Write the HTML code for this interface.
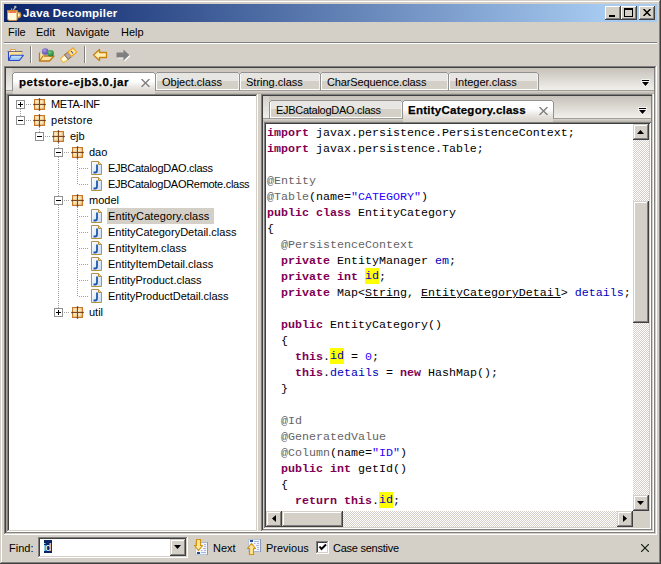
<!DOCTYPE html>
<html><head><meta charset="utf-8"><style>
html,body{margin:0;padding:0;width:661px;height:564px;overflow:hidden;background:#D4D0C8}
body>div,body>span,body>svg,div>div{position:absolute}
span{white-space:pre}
.cl{position:absolute;white-space:pre;font:400 11.667px/16px "Liberation Mono",monospace;color:#000;height:16px}
.cl b{font-weight:inherit}
</style></head><body>
<div style="left:0px;top:0px;width:661px;height:564px;background:#D4D0C8;"></div>
<div style="left:0px;top:0px;width:660px;height:1px;background:#D4D0C8;"></div>
<div style="left:1px;top:1px;width:658px;height:1px;background:#FFFFFF;"></div>
<div style="left:1px;top:1px;width:1px;height:561px;background:#FFFFFF;"></div>
<div style="left:660px;top:0px;width:1px;height:564px;background:#404040;"></div>
<div style="left:0px;top:563px;width:661px;height:1px;background:#404040;"></div>
<div style="left:659px;top:1px;width:1px;height:562px;background:#808080;"></div>
<div style="left:1px;top:562px;width:659px;height:1px;background:#808080;"></div>
<div style="left:4px;top:4px;width:653px;height:18px;background:linear-gradient(to right,#0A246A 0,#A6CAF0 601px);"></div>
<svg style="left:4px;top:4px" width="18" height="18" viewBox="0 0 18 18">
<path d="M7.3 6.3 L7.8 4.3" stroke="#A0A0A0" stroke-width="1.2" fill="none"/>
<path d="M9.3 6.3 L11 3.6" stroke="#A8A8A8" stroke-width="1.3" fill="none"/><circle cx="11.3" cy="3" r="1.2" fill="#B8B8B8"/>
<path d="M13.5 8.5 h0.8 a2.3 2.5 0 0 1 0 5 h-0.8" stroke="#C89040" stroke-width="1.4" fill="#FFF0D0"/>
<path d="M3.5 6.5 H13.5 V14.5 Q13.5 16.5 11.5 16.5 H5.5 Q3.5 16.5 3.5 14.5 Z" fill="#FFF8DC" stroke="#C08838" stroke-width="1"/>
<rect x="4" y="7" width="9" height="2" fill="#F0A050"/>
<rect x="6" y="7.2" width="6" height="1.6" fill="#F07050"/>
<path d="M12.5 8 V15" stroke="#E8C888" stroke-width="1"/>
</svg>
<span style="left:23px;top:5px;font:700 11.5px/16px 'Liberation Sans',sans-serif;color:#FFFFFF;letter-spacing:0.2px;">Java Decompiler</span>
<div style="left:605px;top:6px;width:16px;height:14px;background:#D4D0C8;"></div>
<div style="left:605px;top:6px;width:16px;height:1px;background:#FFFFFF;"></div>
<div style="left:605px;top:6px;width:1px;height:14px;background:#FFFFFF;"></div>
<div style="left:605px;top:19px;width:16px;height:1px;background:#404040;"></div>
<div style="left:620px;top:6px;width:1px;height:14px;background:#404040;"></div>
<div style="left:606px;top:18px;width:14px;height:1px;background:#808080;"></div>
<div style="left:619px;top:7px;width:1px;height:12px;background:#808080;"></div>
<div style="left:609px;top:15px;width:6px;height:2px;background:#000"></div>
<div style="left:621px;top:6px;width:16px;height:14px;background:#D4D0C8;"></div>
<div style="left:621px;top:6px;width:16px;height:1px;background:#FFFFFF;"></div>
<div style="left:621px;top:6px;width:1px;height:14px;background:#FFFFFF;"></div>
<div style="left:621px;top:19px;width:16px;height:1px;background:#404040;"></div>
<div style="left:636px;top:6px;width:1px;height:14px;background:#404040;"></div>
<div style="left:622px;top:18px;width:14px;height:1px;background:#808080;"></div>
<div style="left:635px;top:7px;width:1px;height:12px;background:#808080;"></div>
<div style="left:624px;top:8px;width:9px;height:9px;box-sizing:border-box;border:1px solid #000;border-top-width:2px"></div>
<div style="left:639px;top:6px;width:16px;height:14px;background:#D4D0C8;"></div>
<div style="left:639px;top:6px;width:16px;height:1px;background:#FFFFFF;"></div>
<div style="left:639px;top:6px;width:1px;height:14px;background:#FFFFFF;"></div>
<div style="left:639px;top:19px;width:16px;height:1px;background:#404040;"></div>
<div style="left:654px;top:6px;width:1px;height:14px;background:#404040;"></div>
<div style="left:640px;top:18px;width:14px;height:1px;background:#808080;"></div>
<div style="left:653px;top:7px;width:1px;height:12px;background:#808080;"></div>
<svg style="left:643px;top:9px" width="8" height="7" viewBox="0 0 8 7"><path d="M0.5 0 L7.5 7 M7.5 0 L0.5 7" stroke="#000" stroke-width="1.5"/></svg>
<span style="left:8px;top:24px;font:400 11px/16px 'Liberation Sans',sans-serif;color:#000;">File</span>
<span style="left:36px;top:24px;font:400 11px/16px 'Liberation Sans',sans-serif;color:#000;">Edit</span>
<span style="left:66px;top:24px;font:400 11px/16px 'Liberation Sans',sans-serif;color:#000;">Navigate</span>
<span style="left:121px;top:24px;font:400 11px/16px 'Liberation Sans',sans-serif;color:#000;">Help</span>
<div style="left:4px;top:42px;width:653px;height:1px;background:#808080;"></div>
<div style="left:4px;top:43px;width:653px;height:1px;background:#FFFFFF;"></div>
<div style="left:30px;top:46px;width:1px;height:17px;background:#808080;"></div>
<div style="left:31px;top:46px;width:1px;height:17px;background:#FFFFFF;"></div>
<div style="left:84px;top:46px;width:1px;height:17px;background:#808080;"></div>
<div style="left:85px;top:46px;width:1px;height:17px;background:#FFFFFF;"></div>
<svg style="left:6px;top:46px" width="20" height="18" viewBox="0 0 20 18">
<defs><linearGradient id="fl" x1="0" y1="0" x2="0" y2="1"><stop offset="0" stop-color="#D0ECFF"/><stop offset="1" stop-color="#88B8F0"/></linearGradient></defs>
<path d="M4.5 5.5 v-2 h5 v2" fill="#FFF" stroke="#D8A048" stroke-width="1"/>
<path d="M1.5 5.5 h15" stroke="#806878" stroke-width="1.1"/>
<rect x="3" y="6" width="12" height="8" fill="#FFE490"/>
<path d="M2.5 6 V14.5" stroke="#2444C4" stroke-width="1.1"/>
<path d="M5 9.3 H17.3 L13.3 14.5 H2.8 Z" fill="url(#fl)" stroke="#2848C8" stroke-width="1.1" stroke-linejoin="round"/>
</svg>
<svg style="left:36px;top:45px" width="20" height="19" viewBox="0 0 20 19">
<path d="M3.5 7.5 v8.5 h10 l4.5-5 h-10" fill="#FFE4A0" stroke="#C07818" stroke-width="1.3" stroke-linejoin="round"/>
<path d="M3.5 16 l4-5.5" stroke="#C07818" stroke-width="1.2"/>
<defs><radialGradient id="bp" cx="0.4" cy="0.35" r="0.7"><stop offset="0" stop-color="#A898E0"/><stop offset="1" stop-color="#5444A8"/></radialGradient>
<radialGradient id="bgn" cx="0.4" cy="0.35" r="0.7"><stop offset="0" stop-color="#70C880"/><stop offset="1" stop-color="#1E7A30"/></radialGradient></defs>
<circle cx="9.2" cy="6.5" r="3.3" fill="url(#bp)"/>
<circle cx="14.5" cy="8.2" r="3.3" fill="url(#bgn)"/>
</svg>
<svg style="left:58px;top:45px" width="22" height="19" viewBox="0 0 22 19">
<g transform="translate(10.4 10.4) rotate(-40)">
<path d="M-8.5 -2.3 L-2.6 -2.9 V2.9 L-8.5 2.3 Z" fill="#FFFCE0" stroke="#F0B030" stroke-width="1"/>
<rect x="-2.6" y="-2.9" width="4.3" height="5.8" fill="#B0A8BC" stroke="#987850" stroke-width="1"/>
<rect x="1.7" y="-2.9" width="6.8" height="5.8" fill="#FFE490" stroke="#F0A020" stroke-width="1"/>
<circle cx="4.8" cy="-0.9" r="0.7" fill="#2050A8"/><circle cx="4.8" cy="0.7" r="0.7" fill="#2050A8"/>
</g>
</svg>
<svg style="left:92px;top:48px" width="16" height="14" viewBox="0 0 16 14">
<path d="M1.5 7 L7.5 1.5 V4.5 H14.5 V9.5 H7.5 V12.5 Z" fill="#FFEFB0" stroke="#C88010" stroke-width="1.3" stroke-linejoin="round"/>
</svg>
<svg style="left:115px;top:48px" width="17" height="15" viewBox="0 0 17 15">
<path d="M2.5 5.5 H9.5 V2.5 L15.5 8 L9.5 13.5 V10.5 H2.5 Z" fill="#FFFFFF"/>
<path d="M1.5 4.5 H8.5 V1.5 L14.5 7 L8.5 12.5 V9.5 H1.5 Z" fill="#808080"/>
</svg>
<div style="left:4px;top:66px;width:653px;height:1px;background:#808080;"></div>
<div style="left:4px;top:66px;width:1px;height:469px;background:#808080;"></div>
<div style="left:5px;top:67px;width:651px;height:1px;background:#404040;"></div>
<div style="left:5px;top:67px;width:1px;height:467px;background:#404040;"></div>
<div style="left:654px;top:68px;width:1px;height:465px;background:#808080;"></div>
<div style="left:655px;top:67px;width:1px;height:467px;background:#D4D0C8;"></div>
<div style="left:656px;top:66px;width:1px;height:469px;background:#FFFFFF;"></div>
<div style="left:6px;top:532px;width:649px;height:1px;background:#808080;"></div>
<div style="left:5px;top:533px;width:651px;height:1px;background:#D4D0C8;"></div>
<div style="left:4px;top:534px;width:653px;height:1px;background:#FFFFFF;"></div>
<div style="left:6px;top:68px;width:648px;height:22px;background:linear-gradient(#C6C2BA,#F2F0EC);"></div>
<div style="left:6px;top:90px;width:648px;height:1px;background:#A09C98;"></div>
<div style="left:6px;top:91px;width:648px;height:3px;background:linear-gradient(#DAD6CE,#B4B0A8);"></div>
<div style="left:6px;top:68px;width:6px;height:22px;background:linear-gradient(#D4D0C8,#F0EEEA);"></div>
<div style="left:156px;top:73px;width:83px;height:8px;background:#E8E6E2;"></div>
<div style="left:156px;top:81px;width:83px;height:8px;background:#D4D0C8;"></div>
<div style="left:156px;top:89px;width:83px;height:1px;background:#FFFFFF;"></div>
<div style="left:156px;top:73px;width:1px;height:17px;background:#FFFFFF;"></div>
<div style="left:238px;top:73px;width:1px;height:17px;background:#F4F2EE;"></div>
<div style="left:157px;top:72px;width:81px;height:1px;background:#919191;"></div>
<div style="left:156px;top:73px;width:1px;height:1px;background:#A8A6A2;"></div>
<div style="left:238px;top:73px;width:1px;height:1px;background:#A8A6A2;"></div>
<div style="left:155px;top:72px;width:1px;height:2px;background:#C8C4BC;"></div>
<div style="left:239px;top:72px;width:1px;height:2px;background:#C8C4BC;"></div>
<div style="left:155px;top:74px;width:1px;height:17px;background:#919191;"></div>
<div style="left:239px;top:74px;width:1px;height:17px;background:#919191;"></div>
<span style="left:162px;top:74px;font:400 11px/16px 'Liberation Sans',sans-serif;color:#000;letter-spacing:0px;">Object.class</span>
<div style="left:240px;top:73px;width:80px;height:8px;background:#E8E6E2;"></div>
<div style="left:240px;top:81px;width:80px;height:8px;background:#D4D0C8;"></div>
<div style="left:240px;top:89px;width:80px;height:1px;background:#FFFFFF;"></div>
<div style="left:240px;top:73px;width:1px;height:17px;background:#FFFFFF;"></div>
<div style="left:319px;top:73px;width:1px;height:17px;background:#F4F2EE;"></div>
<div style="left:241px;top:72px;width:78px;height:1px;background:#919191;"></div>
<div style="left:240px;top:73px;width:1px;height:1px;background:#A8A6A2;"></div>
<div style="left:319px;top:73px;width:1px;height:1px;background:#A8A6A2;"></div>
<div style="left:239px;top:72px;width:1px;height:2px;background:#C8C4BC;"></div>
<div style="left:320px;top:72px;width:1px;height:2px;background:#C8C4BC;"></div>
<div style="left:239px;top:74px;width:1px;height:17px;background:#919191;"></div>
<div style="left:320px;top:74px;width:1px;height:17px;background:#919191;"></div>
<span style="left:246px;top:74px;font:400 11px/16px 'Liberation Sans',sans-serif;color:#000;letter-spacing:0px;">String.class</span>
<div style="left:321px;top:73px;width:127px;height:8px;background:#E8E6E2;"></div>
<div style="left:321px;top:81px;width:127px;height:8px;background:#D4D0C8;"></div>
<div style="left:321px;top:89px;width:127px;height:1px;background:#FFFFFF;"></div>
<div style="left:321px;top:73px;width:1px;height:17px;background:#FFFFFF;"></div>
<div style="left:447px;top:73px;width:1px;height:17px;background:#F4F2EE;"></div>
<div style="left:322px;top:72px;width:125px;height:1px;background:#919191;"></div>
<div style="left:321px;top:73px;width:1px;height:1px;background:#A8A6A2;"></div>
<div style="left:447px;top:73px;width:1px;height:1px;background:#A8A6A2;"></div>
<div style="left:320px;top:72px;width:1px;height:2px;background:#C8C4BC;"></div>
<div style="left:448px;top:72px;width:1px;height:2px;background:#C8C4BC;"></div>
<div style="left:320px;top:74px;width:1px;height:17px;background:#919191;"></div>
<div style="left:448px;top:74px;width:1px;height:17px;background:#919191;"></div>
<span style="left:327px;top:74px;font:400 11px/16px 'Liberation Sans',sans-serif;color:#000;letter-spacing:-0.12px;">CharSequence.class</span>
<div style="left:449px;top:73px;width:89px;height:8px;background:#E8E6E2;"></div>
<div style="left:449px;top:81px;width:89px;height:8px;background:#D4D0C8;"></div>
<div style="left:449px;top:89px;width:89px;height:1px;background:#FFFFFF;"></div>
<div style="left:449px;top:73px;width:1px;height:17px;background:#FFFFFF;"></div>
<div style="left:537px;top:73px;width:1px;height:17px;background:#F4F2EE;"></div>
<div style="left:450px;top:72px;width:87px;height:1px;background:#919191;"></div>
<div style="left:449px;top:73px;width:1px;height:1px;background:#A8A6A2;"></div>
<div style="left:537px;top:73px;width:1px;height:1px;background:#A8A6A2;"></div>
<div style="left:448px;top:72px;width:1px;height:2px;background:#C8C4BC;"></div>
<div style="left:538px;top:72px;width:1px;height:2px;background:#C8C4BC;"></div>
<div style="left:448px;top:74px;width:1px;height:17px;background:#919191;"></div>
<div style="left:538px;top:74px;width:1px;height:17px;background:#919191;"></div>
<span style="left:455px;top:74px;font:400 11px/16px 'Liberation Sans',sans-serif;color:#000;letter-spacing:0px;">Integer.class</span>
<div style="left:13px;top:73px;width:142px;height:21px;background:linear-gradient(#FFFFFF 0,#FFFFFF 8px,#E2DED8 16px,#D8D4CC 21px);"></div>
<div style="left:14px;top:72px;width:140px;height:1px;background:#919191;"></div>
<div style="left:12px;top:74px;width:1px;height:17px;background:#919191;"></div>
<div style="left:155px;top:74px;width:1px;height:17px;background:#919191;"></div>
<div style="left:13px;top:73px;width:1px;height:1px;background:#919191;"></div>
<div style="left:154px;top:73px;width:1px;height:1px;background:#919191;"></div>
<span style="left:19px;top:74px;font:700 11.5px/16px 'Liberation Sans',sans-serif;color:#000;letter-spacing:0.58px;-webkit-text-stroke:0.25px #000;">petstore-ejb3.0.jar</span>
<svg style="left:141px;top:79px" width="9" height="8" viewBox="0 0 9 8"><path d="M0.5 0 L8.5 8 M8.5 0 L0.5 8" stroke="#808080" stroke-width="1.4"/></svg>
<svg style="left:640px;top:78px" width="11" height="10" viewBox="0 0 11 10"><path d="M1 1.5 H10 M1 3.5 H10 L5.5 9 Z" stroke="#FFFFFF" stroke-width="1" fill="#FFFFFF" opacity="0.7"/><path d="M2 2.5 H9" stroke="#000" stroke-width="1"/><path d="M2 4 H9 L5.5 8 Z" fill="#000"/></svg>
<div style="left:6px;top:94px;width:251px;height:1px;background:#808080;"></div>
<div style="left:7px;top:95px;width:249px;height:1px;background:#404040;"></div>
<div style="left:261px;top:94px;width:391px;height:1px;background:#808080;"></div>
<div style="left:262px;top:95px;width:390px;height:1px;background:#404040;"></div>
<div style="left:7px;top:94px;width:1px;height:438px;background:#808080;"></div>
<div style="left:8px;top:95px;width:1px;height:436px;background:#404040;"></div>
<div style="left:9px;top:96px;width:247px;height:434px;background:#FFFFFF;"></div>
<div style="left:256px;top:95px;width:1px;height:436px;background:#D4D0C8;"></div>
<div style="left:257px;top:94px;width:1px;height:438px;background:#FFFFFF;"></div>
<div style="left:8px;top:530px;width:249px;height:1px;background:#D4D0C8;"></div>
<div style="left:7px;top:531px;width:251px;height:1px;background:#FFFFFF;"></div>
<div style="left:6px;top:94px;width:1px;height:438px;background:#A8A49C;"></div>
<div style="left:20px;top:109px;width:1px;height:1px;background:#A0A0A0;"></div>
<div style="left:20px;top:111px;width:1px;height:1px;background:#A0A0A0;"></div>
<div style="left:20px;top:113px;width:1px;height:1px;background:#A0A0A0;"></div>
<div style="left:20px;top:115px;width:1px;height:1px;background:#A0A0A0;"></div>
<div style="left:39px;top:127px;width:1px;height:1px;background:#A0A0A0;"></div>
<div style="left:39px;top:129px;width:1px;height:1px;background:#A0A0A0;"></div>
<div style="left:39px;top:131px;width:1px;height:1px;background:#A0A0A0;"></div>
<div style="left:58px;top:143px;width:1px;height:1px;background:#A0A0A0;"></div>
<div style="left:58px;top:145px;width:1px;height:1px;background:#A0A0A0;"></div>
<div style="left:58px;top:147px;width:1px;height:1px;background:#A0A0A0;"></div>
<div style="left:58px;top:149px;width:1px;height:1px;background:#A0A0A0;"></div>
<div style="left:58px;top:151px;width:1px;height:1px;background:#A0A0A0;"></div>
<div style="left:58px;top:153px;width:1px;height:1px;background:#A0A0A0;"></div>
<div style="left:58px;top:155px;width:1px;height:1px;background:#A0A0A0;"></div>
<div style="left:58px;top:157px;width:1px;height:1px;background:#A0A0A0;"></div>
<div style="left:58px;top:159px;width:1px;height:1px;background:#A0A0A0;"></div>
<div style="left:58px;top:161px;width:1px;height:1px;background:#A0A0A0;"></div>
<div style="left:58px;top:163px;width:1px;height:1px;background:#A0A0A0;"></div>
<div style="left:58px;top:165px;width:1px;height:1px;background:#A0A0A0;"></div>
<div style="left:58px;top:167px;width:1px;height:1px;background:#A0A0A0;"></div>
<div style="left:58px;top:169px;width:1px;height:1px;background:#A0A0A0;"></div>
<div style="left:58px;top:171px;width:1px;height:1px;background:#A0A0A0;"></div>
<div style="left:58px;top:173px;width:1px;height:1px;background:#A0A0A0;"></div>
<div style="left:58px;top:175px;width:1px;height:1px;background:#A0A0A0;"></div>
<div style="left:58px;top:177px;width:1px;height:1px;background:#A0A0A0;"></div>
<div style="left:58px;top:179px;width:1px;height:1px;background:#A0A0A0;"></div>
<div style="left:58px;top:181px;width:1px;height:1px;background:#A0A0A0;"></div>
<div style="left:58px;top:183px;width:1px;height:1px;background:#A0A0A0;"></div>
<div style="left:58px;top:185px;width:1px;height:1px;background:#A0A0A0;"></div>
<div style="left:58px;top:187px;width:1px;height:1px;background:#A0A0A0;"></div>
<div style="left:58px;top:189px;width:1px;height:1px;background:#A0A0A0;"></div>
<div style="left:58px;top:191px;width:1px;height:1px;background:#A0A0A0;"></div>
<div style="left:58px;top:193px;width:1px;height:1px;background:#A0A0A0;"></div>
<div style="left:58px;top:195px;width:1px;height:1px;background:#A0A0A0;"></div>
<div style="left:58px;top:197px;width:1px;height:1px;background:#A0A0A0;"></div>
<div style="left:58px;top:199px;width:1px;height:1px;background:#A0A0A0;"></div>
<div style="left:58px;top:201px;width:1px;height:1px;background:#A0A0A0;"></div>
<div style="left:58px;top:203px;width:1px;height:1px;background:#A0A0A0;"></div>
<div style="left:58px;top:205px;width:1px;height:1px;background:#A0A0A0;"></div>
<div style="left:58px;top:207px;width:1px;height:1px;background:#A0A0A0;"></div>
<div style="left:58px;top:209px;width:1px;height:1px;background:#A0A0A0;"></div>
<div style="left:58px;top:211px;width:1px;height:1px;background:#A0A0A0;"></div>
<div style="left:58px;top:213px;width:1px;height:1px;background:#A0A0A0;"></div>
<div style="left:58px;top:215px;width:1px;height:1px;background:#A0A0A0;"></div>
<div style="left:58px;top:217px;width:1px;height:1px;background:#A0A0A0;"></div>
<div style="left:58px;top:219px;width:1px;height:1px;background:#A0A0A0;"></div>
<div style="left:58px;top:221px;width:1px;height:1px;background:#A0A0A0;"></div>
<div style="left:58px;top:223px;width:1px;height:1px;background:#A0A0A0;"></div>
<div style="left:58px;top:225px;width:1px;height:1px;background:#A0A0A0;"></div>
<div style="left:58px;top:227px;width:1px;height:1px;background:#A0A0A0;"></div>
<div style="left:58px;top:229px;width:1px;height:1px;background:#A0A0A0;"></div>
<div style="left:58px;top:231px;width:1px;height:1px;background:#A0A0A0;"></div>
<div style="left:58px;top:233px;width:1px;height:1px;background:#A0A0A0;"></div>
<div style="left:58px;top:235px;width:1px;height:1px;background:#A0A0A0;"></div>
<div style="left:58px;top:237px;width:1px;height:1px;background:#A0A0A0;"></div>
<div style="left:58px;top:239px;width:1px;height:1px;background:#A0A0A0;"></div>
<div style="left:58px;top:241px;width:1px;height:1px;background:#A0A0A0;"></div>
<div style="left:58px;top:243px;width:1px;height:1px;background:#A0A0A0;"></div>
<div style="left:58px;top:245px;width:1px;height:1px;background:#A0A0A0;"></div>
<div style="left:58px;top:247px;width:1px;height:1px;background:#A0A0A0;"></div>
<div style="left:58px;top:249px;width:1px;height:1px;background:#A0A0A0;"></div>
<div style="left:58px;top:251px;width:1px;height:1px;background:#A0A0A0;"></div>
<div style="left:58px;top:253px;width:1px;height:1px;background:#A0A0A0;"></div>
<div style="left:58px;top:255px;width:1px;height:1px;background:#A0A0A0;"></div>
<div style="left:58px;top:257px;width:1px;height:1px;background:#A0A0A0;"></div>
<div style="left:58px;top:259px;width:1px;height:1px;background:#A0A0A0;"></div>
<div style="left:58px;top:261px;width:1px;height:1px;background:#A0A0A0;"></div>
<div style="left:58px;top:263px;width:1px;height:1px;background:#A0A0A0;"></div>
<div style="left:58px;top:265px;width:1px;height:1px;background:#A0A0A0;"></div>
<div style="left:58px;top:267px;width:1px;height:1px;background:#A0A0A0;"></div>
<div style="left:58px;top:269px;width:1px;height:1px;background:#A0A0A0;"></div>
<div style="left:58px;top:271px;width:1px;height:1px;background:#A0A0A0;"></div>
<div style="left:58px;top:273px;width:1px;height:1px;background:#A0A0A0;"></div>
<div style="left:58px;top:275px;width:1px;height:1px;background:#A0A0A0;"></div>
<div style="left:58px;top:277px;width:1px;height:1px;background:#A0A0A0;"></div>
<div style="left:58px;top:279px;width:1px;height:1px;background:#A0A0A0;"></div>
<div style="left:58px;top:281px;width:1px;height:1px;background:#A0A0A0;"></div>
<div style="left:58px;top:283px;width:1px;height:1px;background:#A0A0A0;"></div>
<div style="left:58px;top:285px;width:1px;height:1px;background:#A0A0A0;"></div>
<div style="left:58px;top:287px;width:1px;height:1px;background:#A0A0A0;"></div>
<div style="left:58px;top:289px;width:1px;height:1px;background:#A0A0A0;"></div>
<div style="left:58px;top:291px;width:1px;height:1px;background:#A0A0A0;"></div>
<div style="left:58px;top:293px;width:1px;height:1px;background:#A0A0A0;"></div>
<div style="left:58px;top:295px;width:1px;height:1px;background:#A0A0A0;"></div>
<div style="left:58px;top:297px;width:1px;height:1px;background:#A0A0A0;"></div>
<div style="left:58px;top:299px;width:1px;height:1px;background:#A0A0A0;"></div>
<div style="left:58px;top:301px;width:1px;height:1px;background:#A0A0A0;"></div>
<div style="left:58px;top:303px;width:1px;height:1px;background:#A0A0A0;"></div>
<div style="left:58px;top:305px;width:1px;height:1px;background:#A0A0A0;"></div>
<div style="left:58px;top:307px;width:1px;height:1px;background:#A0A0A0;"></div>
<div style="left:77px;top:159px;width:1px;height:1px;background:#A0A0A0;"></div>
<div style="left:77px;top:161px;width:1px;height:1px;background:#A0A0A0;"></div>
<div style="left:77px;top:163px;width:1px;height:1px;background:#A0A0A0;"></div>
<div style="left:77px;top:165px;width:1px;height:1px;background:#A0A0A0;"></div>
<div style="left:77px;top:167px;width:1px;height:1px;background:#A0A0A0;"></div>
<div style="left:77px;top:169px;width:1px;height:1px;background:#A0A0A0;"></div>
<div style="left:77px;top:171px;width:1px;height:1px;background:#A0A0A0;"></div>
<div style="left:77px;top:173px;width:1px;height:1px;background:#A0A0A0;"></div>
<div style="left:77px;top:175px;width:1px;height:1px;background:#A0A0A0;"></div>
<div style="left:77px;top:177px;width:1px;height:1px;background:#A0A0A0;"></div>
<div style="left:77px;top:179px;width:1px;height:1px;background:#A0A0A0;"></div>
<div style="left:77px;top:181px;width:1px;height:1px;background:#A0A0A0;"></div>
<div style="left:77px;top:183px;width:1px;height:1px;background:#A0A0A0;"></div>
<div style="left:77px;top:207px;width:1px;height:1px;background:#A0A0A0;"></div>
<div style="left:77px;top:209px;width:1px;height:1px;background:#A0A0A0;"></div>
<div style="left:77px;top:211px;width:1px;height:1px;background:#A0A0A0;"></div>
<div style="left:77px;top:213px;width:1px;height:1px;background:#A0A0A0;"></div>
<div style="left:77px;top:215px;width:1px;height:1px;background:#A0A0A0;"></div>
<div style="left:77px;top:217px;width:1px;height:1px;background:#A0A0A0;"></div>
<div style="left:77px;top:219px;width:1px;height:1px;background:#A0A0A0;"></div>
<div style="left:77px;top:221px;width:1px;height:1px;background:#A0A0A0;"></div>
<div style="left:77px;top:223px;width:1px;height:1px;background:#A0A0A0;"></div>
<div style="left:77px;top:225px;width:1px;height:1px;background:#A0A0A0;"></div>
<div style="left:77px;top:227px;width:1px;height:1px;background:#A0A0A0;"></div>
<div style="left:77px;top:229px;width:1px;height:1px;background:#A0A0A0;"></div>
<div style="left:77px;top:231px;width:1px;height:1px;background:#A0A0A0;"></div>
<div style="left:77px;top:233px;width:1px;height:1px;background:#A0A0A0;"></div>
<div style="left:77px;top:235px;width:1px;height:1px;background:#A0A0A0;"></div>
<div style="left:77px;top:237px;width:1px;height:1px;background:#A0A0A0;"></div>
<div style="left:77px;top:239px;width:1px;height:1px;background:#A0A0A0;"></div>
<div style="left:77px;top:241px;width:1px;height:1px;background:#A0A0A0;"></div>
<div style="left:77px;top:243px;width:1px;height:1px;background:#A0A0A0;"></div>
<div style="left:77px;top:245px;width:1px;height:1px;background:#A0A0A0;"></div>
<div style="left:77px;top:247px;width:1px;height:1px;background:#A0A0A0;"></div>
<div style="left:77px;top:249px;width:1px;height:1px;background:#A0A0A0;"></div>
<div style="left:77px;top:251px;width:1px;height:1px;background:#A0A0A0;"></div>
<div style="left:77px;top:253px;width:1px;height:1px;background:#A0A0A0;"></div>
<div style="left:77px;top:255px;width:1px;height:1px;background:#A0A0A0;"></div>
<div style="left:77px;top:257px;width:1px;height:1px;background:#A0A0A0;"></div>
<div style="left:77px;top:259px;width:1px;height:1px;background:#A0A0A0;"></div>
<div style="left:77px;top:261px;width:1px;height:1px;background:#A0A0A0;"></div>
<div style="left:77px;top:263px;width:1px;height:1px;background:#A0A0A0;"></div>
<div style="left:77px;top:265px;width:1px;height:1px;background:#A0A0A0;"></div>
<div style="left:77px;top:267px;width:1px;height:1px;background:#A0A0A0;"></div>
<div style="left:77px;top:269px;width:1px;height:1px;background:#A0A0A0;"></div>
<div style="left:77px;top:271px;width:1px;height:1px;background:#A0A0A0;"></div>
<div style="left:77px;top:273px;width:1px;height:1px;background:#A0A0A0;"></div>
<div style="left:77px;top:275px;width:1px;height:1px;background:#A0A0A0;"></div>
<div style="left:77px;top:277px;width:1px;height:1px;background:#A0A0A0;"></div>
<div style="left:77px;top:279px;width:1px;height:1px;background:#A0A0A0;"></div>
<div style="left:77px;top:281px;width:1px;height:1px;background:#A0A0A0;"></div>
<div style="left:77px;top:283px;width:1px;height:1px;background:#A0A0A0;"></div>
<div style="left:77px;top:285px;width:1px;height:1px;background:#A0A0A0;"></div>
<div style="left:77px;top:287px;width:1px;height:1px;background:#A0A0A0;"></div>
<div style="left:77px;top:289px;width:1px;height:1px;background:#A0A0A0;"></div>
<div style="left:77px;top:291px;width:1px;height:1px;background:#A0A0A0;"></div>
<div style="left:77px;top:293px;width:1px;height:1px;background:#A0A0A0;"></div>
<div style="left:77px;top:295px;width:1px;height:1px;background:#A0A0A0;"></div>
<div style="left:16px;top:100px;width:9px;height:9px;background:#FFFFFF;box-sizing:border-box;border:1px solid #919191;"></div>
<div style="left:18px;top:104px;width:5px;height:1px;background:#000;"></div>
<div style="left:20px;top:102px;width:1px;height:5px;background:#000;"></div>
<div style="left:26px;top:104px;width:1px;height:1px;background:#A0A0A0;"></div>
<div style="left:28px;top:104px;width:1px;height:1px;background:#A0A0A0;"></div>
<div style="left:30px;top:104px;width:1px;height:1px;background:#A0A0A0;"></div>
<svg style="left:33px;top:98px" width="13" height="13" viewBox="0 0 13 13">
<defs><radialGradient id="pg" cx="0.4" cy="0.4" r="0.7"><stop offset="0" stop-color="#FFF8C8"/><stop offset="0.5" stop-color="#F4D8A8"/><stop offset="1" stop-color="#D8AC78"/></radialGradient></defs>
<rect x="1.5" y="1.5" width="10" height="10" fill="#E0B888" stroke="#C87828" stroke-width="1"/>
<rect x="2" y="2" width="4.5" height="4.5" fill="url(#pg)"/><rect x="6.5" y="2" width="4.5" height="4.5" fill="url(#pg)"/>
<rect x="2" y="6.5" width="4.5" height="4.5" fill="url(#pg)"/><rect x="6.5" y="6.5" width="4.5" height="4.5" fill="url(#pg)"/>
<path d="M6.5 0.5 V12.5 M0.5 6.5 H12.5" stroke="#7A4A28" stroke-width="1"/><path d="M6.5 0.5 V1.5 M6.5 11.5 V12.5 M0.5 6.5 H1.5 M11.5 6.5 H12.5" stroke="#5A3010" stroke-width="1.5"/>
</svg>
<span style="left:51px;top:96px;font:400 11px/16px 'Liberation Sans',sans-serif;color:#000;letter-spacing:-0.29px;">META-INF</span>
<div style="left:16px;top:116px;width:9px;height:9px;background:#FFFFFF;box-sizing:border-box;border:1px solid #919191;"></div>
<div style="left:18px;top:120px;width:5px;height:1px;background:#000;"></div>
<div style="left:26px;top:120px;width:1px;height:1px;background:#A0A0A0;"></div>
<div style="left:28px;top:120px;width:1px;height:1px;background:#A0A0A0;"></div>
<div style="left:30px;top:120px;width:1px;height:1px;background:#A0A0A0;"></div>
<svg style="left:33px;top:114px" width="13" height="13" viewBox="0 0 13 13">
<defs><radialGradient id="pg" cx="0.4" cy="0.4" r="0.7"><stop offset="0" stop-color="#FFF8C8"/><stop offset="0.5" stop-color="#F4D8A8"/><stop offset="1" stop-color="#D8AC78"/></radialGradient></defs>
<rect x="1.5" y="1.5" width="10" height="10" fill="#E0B888" stroke="#C87828" stroke-width="1"/>
<rect x="2" y="2" width="4.5" height="4.5" fill="url(#pg)"/><rect x="6.5" y="2" width="4.5" height="4.5" fill="url(#pg)"/>
<rect x="2" y="6.5" width="4.5" height="4.5" fill="url(#pg)"/><rect x="6.5" y="6.5" width="4.5" height="4.5" fill="url(#pg)"/>
<path d="M6.5 0.5 V12.5 M0.5 6.5 H12.5" stroke="#7A4A28" stroke-width="1"/><path d="M6.5 0.5 V1.5 M6.5 11.5 V12.5 M0.5 6.5 H1.5 M11.5 6.5 H12.5" stroke="#5A3010" stroke-width="1.5"/>
</svg>
<span style="left:51px;top:112px;font:400 11px/16px 'Liberation Sans',sans-serif;color:#000;letter-spacing:0.28px;">petstore</span>
<div style="left:35px;top:132px;width:9px;height:9px;background:#FFFFFF;box-sizing:border-box;border:1px solid #919191;"></div>
<div style="left:37px;top:136px;width:5px;height:1px;background:#000;"></div>
<div style="left:45px;top:136px;width:1px;height:1px;background:#A0A0A0;"></div>
<div style="left:47px;top:136px;width:1px;height:1px;background:#A0A0A0;"></div>
<div style="left:49px;top:136px;width:1px;height:1px;background:#A0A0A0;"></div>
<svg style="left:52px;top:130px" width="13" height="13" viewBox="0 0 13 13">
<defs><radialGradient id="pg" cx="0.4" cy="0.4" r="0.7"><stop offset="0" stop-color="#FFF8C8"/><stop offset="0.5" stop-color="#F4D8A8"/><stop offset="1" stop-color="#D8AC78"/></radialGradient></defs>
<rect x="1.5" y="1.5" width="10" height="10" fill="#E0B888" stroke="#C87828" stroke-width="1"/>
<rect x="2" y="2" width="4.5" height="4.5" fill="url(#pg)"/><rect x="6.5" y="2" width="4.5" height="4.5" fill="url(#pg)"/>
<rect x="2" y="6.5" width="4.5" height="4.5" fill="url(#pg)"/><rect x="6.5" y="6.5" width="4.5" height="4.5" fill="url(#pg)"/>
<path d="M6.5 0.5 V12.5 M0.5 6.5 H12.5" stroke="#7A4A28" stroke-width="1"/><path d="M6.5 0.5 V1.5 M6.5 11.5 V12.5 M0.5 6.5 H1.5 M11.5 6.5 H12.5" stroke="#5A3010" stroke-width="1.5"/>
</svg>
<span style="left:70px;top:128px;font:400 11px/16px 'Liberation Sans',sans-serif;color:#000;letter-spacing:0px;">ejb</span>
<div style="left:54px;top:148px;width:9px;height:9px;background:#FFFFFF;box-sizing:border-box;border:1px solid #919191;"></div>
<div style="left:56px;top:152px;width:5px;height:1px;background:#000;"></div>
<div style="left:64px;top:152px;width:1px;height:1px;background:#A0A0A0;"></div>
<div style="left:66px;top:152px;width:1px;height:1px;background:#A0A0A0;"></div>
<div style="left:68px;top:152px;width:1px;height:1px;background:#A0A0A0;"></div>
<svg style="left:71px;top:146px" width="13" height="13" viewBox="0 0 13 13">
<defs><radialGradient id="pg" cx="0.4" cy="0.4" r="0.7"><stop offset="0" stop-color="#FFF8C8"/><stop offset="0.5" stop-color="#F4D8A8"/><stop offset="1" stop-color="#D8AC78"/></radialGradient></defs>
<rect x="1.5" y="1.5" width="10" height="10" fill="#E0B888" stroke="#C87828" stroke-width="1"/>
<rect x="2" y="2" width="4.5" height="4.5" fill="url(#pg)"/><rect x="6.5" y="2" width="4.5" height="4.5" fill="url(#pg)"/>
<rect x="2" y="6.5" width="4.5" height="4.5" fill="url(#pg)"/><rect x="6.5" y="6.5" width="4.5" height="4.5" fill="url(#pg)"/>
<path d="M6.5 0.5 V12.5 M0.5 6.5 H12.5" stroke="#7A4A28" stroke-width="1"/><path d="M6.5 0.5 V1.5 M6.5 11.5 V12.5 M0.5 6.5 H1.5 M11.5 6.5 H12.5" stroke="#5A3010" stroke-width="1.5"/>
</svg>
<span style="left:89px;top:144px;font:400 11px/16px 'Liberation Sans',sans-serif;color:#000;letter-spacing:0px;">dao</span>
<div style="left:79px;top:168px;width:1px;height:1px;background:#A0A0A0;"></div>
<div style="left:81px;top:168px;width:1px;height:1px;background:#A0A0A0;"></div>
<div style="left:83px;top:168px;width:1px;height:1px;background:#A0A0A0;"></div>
<div style="left:85px;top:168px;width:1px;height:1px;background:#A0A0A0;"></div>
<div style="left:87px;top:168px;width:1px;height:1px;background:#A0A0A0;"></div>
<svg style="left:91px;top:161px" width="12" height="15" viewBox="0 0 12 15">
<defs><linearGradient id="jg" x1="0" y1="0" x2="1" y2="1"><stop offset="0" stop-color="#FFFFFF"/><stop offset="1" stop-color="#C8DCF0"/></linearGradient></defs>
<path d="M0.5 0.5 H7.5 L10.5 3.5 V13.5 H0.5 Z" fill="url(#jg)" stroke="#B89040" stroke-width="1"/>
<path d="M7.5 0.5 V3.5 H10.5" fill="#E8D090" stroke="#B89040" stroke-width="1"/>
<path d="M6 3.5 V9.5 Q6 11.5 4 11.5 H2.5" fill="none" stroke="#2058B0" stroke-width="1.8"/>
</svg>
<span style="left:108px;top:160px;font:400 11px/16px 'Liberation Sans',sans-serif;color:#000;letter-spacing:-0.28px;">EJBCatalogDAO.class</span>
<div style="left:79px;top:184px;width:1px;height:1px;background:#A0A0A0;"></div>
<div style="left:81px;top:184px;width:1px;height:1px;background:#A0A0A0;"></div>
<div style="left:83px;top:184px;width:1px;height:1px;background:#A0A0A0;"></div>
<div style="left:85px;top:184px;width:1px;height:1px;background:#A0A0A0;"></div>
<div style="left:87px;top:184px;width:1px;height:1px;background:#A0A0A0;"></div>
<svg style="left:91px;top:177px" width="12" height="15" viewBox="0 0 12 15">
<defs><linearGradient id="jg" x1="0" y1="0" x2="1" y2="1"><stop offset="0" stop-color="#FFFFFF"/><stop offset="1" stop-color="#C8DCF0"/></linearGradient></defs>
<path d="M0.5 0.5 H7.5 L10.5 3.5 V13.5 H0.5 Z" fill="url(#jg)" stroke="#B89040" stroke-width="1"/>
<path d="M7.5 0.5 V3.5 H10.5" fill="#E8D090" stroke="#B89040" stroke-width="1"/>
<path d="M6 3.5 V9.5 Q6 11.5 4 11.5 H2.5" fill="none" stroke="#2058B0" stroke-width="1.8"/>
</svg>
<span style="left:108px;top:176px;font:400 11px/16px 'Liberation Sans',sans-serif;color:#000;letter-spacing:-0.29px;">EJBCatalogDAORemote.class</span>
<div style="left:54px;top:196px;width:9px;height:9px;background:#FFFFFF;box-sizing:border-box;border:1px solid #919191;"></div>
<div style="left:56px;top:200px;width:5px;height:1px;background:#000;"></div>
<div style="left:64px;top:200px;width:1px;height:1px;background:#A0A0A0;"></div>
<div style="left:66px;top:200px;width:1px;height:1px;background:#A0A0A0;"></div>
<div style="left:68px;top:200px;width:1px;height:1px;background:#A0A0A0;"></div>
<svg style="left:71px;top:194px" width="13" height="13" viewBox="0 0 13 13">
<defs><radialGradient id="pg" cx="0.4" cy="0.4" r="0.7"><stop offset="0" stop-color="#FFF8C8"/><stop offset="0.5" stop-color="#F4D8A8"/><stop offset="1" stop-color="#D8AC78"/></radialGradient></defs>
<rect x="1.5" y="1.5" width="10" height="10" fill="#E0B888" stroke="#C87828" stroke-width="1"/>
<rect x="2" y="2" width="4.5" height="4.5" fill="url(#pg)"/><rect x="6.5" y="2" width="4.5" height="4.5" fill="url(#pg)"/>
<rect x="2" y="6.5" width="4.5" height="4.5" fill="url(#pg)"/><rect x="6.5" y="6.5" width="4.5" height="4.5" fill="url(#pg)"/>
<path d="M6.5 0.5 V12.5 M0.5 6.5 H12.5" stroke="#7A4A28" stroke-width="1"/><path d="M6.5 0.5 V1.5 M6.5 11.5 V12.5 M0.5 6.5 H1.5 M11.5 6.5 H12.5" stroke="#5A3010" stroke-width="1.5"/>
</svg>
<span style="left:89px;top:192px;font:400 11px/16px 'Liberation Sans',sans-serif;color:#000;letter-spacing:0px;">model</span>
<div style="left:79px;top:216px;width:1px;height:1px;background:#A0A0A0;"></div>
<div style="left:81px;top:216px;width:1px;height:1px;background:#A0A0A0;"></div>
<div style="left:83px;top:216px;width:1px;height:1px;background:#A0A0A0;"></div>
<div style="left:85px;top:216px;width:1px;height:1px;background:#A0A0A0;"></div>
<div style="left:87px;top:216px;width:1px;height:1px;background:#A0A0A0;"></div>
<svg style="left:91px;top:209px" width="12" height="15" viewBox="0 0 12 15">
<defs><linearGradient id="jg" x1="0" y1="0" x2="1" y2="1"><stop offset="0" stop-color="#FFFFFF"/><stop offset="1" stop-color="#C8DCF0"/></linearGradient></defs>
<path d="M0.5 0.5 H7.5 L10.5 3.5 V13.5 H0.5 Z" fill="url(#jg)" stroke="#B89040" stroke-width="1"/>
<path d="M7.5 0.5 V3.5 H10.5" fill="#E8D090" stroke="#B89040" stroke-width="1"/>
<path d="M6 3.5 V9.5 Q6 11.5 4 11.5 H2.5" fill="none" stroke="#2058B0" stroke-width="1.8"/>
</svg>
<div style="left:107px;top:208px;width:107px;height:16px;background:#D4D0C8;"></div>
<span style="left:108px;top:208px;font:400 11px/16px 'Liberation Sans',sans-serif;color:#000;letter-spacing:0.1px;">EntityCategory.class</span>
<div style="left:79px;top:232px;width:1px;height:1px;background:#A0A0A0;"></div>
<div style="left:81px;top:232px;width:1px;height:1px;background:#A0A0A0;"></div>
<div style="left:83px;top:232px;width:1px;height:1px;background:#A0A0A0;"></div>
<div style="left:85px;top:232px;width:1px;height:1px;background:#A0A0A0;"></div>
<div style="left:87px;top:232px;width:1px;height:1px;background:#A0A0A0;"></div>
<svg style="left:91px;top:225px" width="12" height="15" viewBox="0 0 12 15">
<defs><linearGradient id="jg" x1="0" y1="0" x2="1" y2="1"><stop offset="0" stop-color="#FFFFFF"/><stop offset="1" stop-color="#C8DCF0"/></linearGradient></defs>
<path d="M0.5 0.5 H7.5 L10.5 3.5 V13.5 H0.5 Z" fill="url(#jg)" stroke="#B89040" stroke-width="1"/>
<path d="M7.5 0.5 V3.5 H10.5" fill="#E8D090" stroke="#B89040" stroke-width="1"/>
<path d="M6 3.5 V9.5 Q6 11.5 4 11.5 H2.5" fill="none" stroke="#2058B0" stroke-width="1.8"/>
</svg>
<span style="left:108px;top:224px;font:400 11px/16px 'Liberation Sans',sans-serif;color:#000;letter-spacing:0px;">EntityCategoryDetail.class</span>
<div style="left:79px;top:248px;width:1px;height:1px;background:#A0A0A0;"></div>
<div style="left:81px;top:248px;width:1px;height:1px;background:#A0A0A0;"></div>
<div style="left:83px;top:248px;width:1px;height:1px;background:#A0A0A0;"></div>
<div style="left:85px;top:248px;width:1px;height:1px;background:#A0A0A0;"></div>
<div style="left:87px;top:248px;width:1px;height:1px;background:#A0A0A0;"></div>
<svg style="left:91px;top:241px" width="12" height="15" viewBox="0 0 12 15">
<defs><linearGradient id="jg" x1="0" y1="0" x2="1" y2="1"><stop offset="0" stop-color="#FFFFFF"/><stop offset="1" stop-color="#C8DCF0"/></linearGradient></defs>
<path d="M0.5 0.5 H7.5 L10.5 3.5 V13.5 H0.5 Z" fill="url(#jg)" stroke="#B89040" stroke-width="1"/>
<path d="M7.5 0.5 V3.5 H10.5" fill="#E8D090" stroke="#B89040" stroke-width="1"/>
<path d="M6 3.5 V9.5 Q6 11.5 4 11.5 H2.5" fill="none" stroke="#2058B0" stroke-width="1.8"/>
</svg>
<span style="left:108px;top:240px;font:400 11px/16px 'Liberation Sans',sans-serif;color:#000;letter-spacing:0.1px;">EntityItem.class</span>
<div style="left:79px;top:264px;width:1px;height:1px;background:#A0A0A0;"></div>
<div style="left:81px;top:264px;width:1px;height:1px;background:#A0A0A0;"></div>
<div style="left:83px;top:264px;width:1px;height:1px;background:#A0A0A0;"></div>
<div style="left:85px;top:264px;width:1px;height:1px;background:#A0A0A0;"></div>
<div style="left:87px;top:264px;width:1px;height:1px;background:#A0A0A0;"></div>
<svg style="left:91px;top:257px" width="12" height="15" viewBox="0 0 12 15">
<defs><linearGradient id="jg" x1="0" y1="0" x2="1" y2="1"><stop offset="0" stop-color="#FFFFFF"/><stop offset="1" stop-color="#C8DCF0"/></linearGradient></defs>
<path d="M0.5 0.5 H7.5 L10.5 3.5 V13.5 H0.5 Z" fill="url(#jg)" stroke="#B89040" stroke-width="1"/>
<path d="M7.5 0.5 V3.5 H10.5" fill="#E8D090" stroke="#B89040" stroke-width="1"/>
<path d="M6 3.5 V9.5 Q6 11.5 4 11.5 H2.5" fill="none" stroke="#2058B0" stroke-width="1.8"/>
</svg>
<span style="left:108px;top:256px;font:400 11px/16px 'Liberation Sans',sans-serif;color:#000;letter-spacing:0px;">EntityItemDetail.class</span>
<div style="left:79px;top:280px;width:1px;height:1px;background:#A0A0A0;"></div>
<div style="left:81px;top:280px;width:1px;height:1px;background:#A0A0A0;"></div>
<div style="left:83px;top:280px;width:1px;height:1px;background:#A0A0A0;"></div>
<div style="left:85px;top:280px;width:1px;height:1px;background:#A0A0A0;"></div>
<div style="left:87px;top:280px;width:1px;height:1px;background:#A0A0A0;"></div>
<svg style="left:91px;top:273px" width="12" height="15" viewBox="0 0 12 15">
<defs><linearGradient id="jg" x1="0" y1="0" x2="1" y2="1"><stop offset="0" stop-color="#FFFFFF"/><stop offset="1" stop-color="#C8DCF0"/></linearGradient></defs>
<path d="M0.5 0.5 H7.5 L10.5 3.5 V13.5 H0.5 Z" fill="url(#jg)" stroke="#B89040" stroke-width="1"/>
<path d="M7.5 0.5 V3.5 H10.5" fill="#E8D090" stroke="#B89040" stroke-width="1"/>
<path d="M6 3.5 V9.5 Q6 11.5 4 11.5 H2.5" fill="none" stroke="#2058B0" stroke-width="1.8"/>
</svg>
<span style="left:108px;top:272px;font:400 11px/16px 'Liberation Sans',sans-serif;color:#000;letter-spacing:0px;">EntityProduct.class</span>
<div style="left:79px;top:296px;width:1px;height:1px;background:#A0A0A0;"></div>
<div style="left:81px;top:296px;width:1px;height:1px;background:#A0A0A0;"></div>
<div style="left:83px;top:296px;width:1px;height:1px;background:#A0A0A0;"></div>
<div style="left:85px;top:296px;width:1px;height:1px;background:#A0A0A0;"></div>
<div style="left:87px;top:296px;width:1px;height:1px;background:#A0A0A0;"></div>
<svg style="left:91px;top:289px" width="12" height="15" viewBox="0 0 12 15">
<defs><linearGradient id="jg" x1="0" y1="0" x2="1" y2="1"><stop offset="0" stop-color="#FFFFFF"/><stop offset="1" stop-color="#C8DCF0"/></linearGradient></defs>
<path d="M0.5 0.5 H7.5 L10.5 3.5 V13.5 H0.5 Z" fill="url(#jg)" stroke="#B89040" stroke-width="1"/>
<path d="M7.5 0.5 V3.5 H10.5" fill="#E8D090" stroke="#B89040" stroke-width="1"/>
<path d="M6 3.5 V9.5 Q6 11.5 4 11.5 H2.5" fill="none" stroke="#2058B0" stroke-width="1.8"/>
</svg>
<span style="left:108px;top:288px;font:400 11px/16px 'Liberation Sans',sans-serif;color:#000;letter-spacing:-0.05px;">EntityProductDetail.class</span>
<div style="left:54px;top:308px;width:9px;height:9px;background:#FFFFFF;box-sizing:border-box;border:1px solid #919191;"></div>
<div style="left:56px;top:312px;width:5px;height:1px;background:#000;"></div>
<div style="left:58px;top:310px;width:1px;height:5px;background:#000;"></div>
<div style="left:64px;top:312px;width:1px;height:1px;background:#A0A0A0;"></div>
<div style="left:66px;top:312px;width:1px;height:1px;background:#A0A0A0;"></div>
<div style="left:68px;top:312px;width:1px;height:1px;background:#A0A0A0;"></div>
<svg style="left:71px;top:306px" width="13" height="13" viewBox="0 0 13 13">
<defs><radialGradient id="pg" cx="0.4" cy="0.4" r="0.7"><stop offset="0" stop-color="#FFF8C8"/><stop offset="0.5" stop-color="#F4D8A8"/><stop offset="1" stop-color="#D8AC78"/></radialGradient></defs>
<rect x="1.5" y="1.5" width="10" height="10" fill="#E0B888" stroke="#C87828" stroke-width="1"/>
<rect x="2" y="2" width="4.5" height="4.5" fill="url(#pg)"/><rect x="6.5" y="2" width="4.5" height="4.5" fill="url(#pg)"/>
<rect x="2" y="6.5" width="4.5" height="4.5" fill="url(#pg)"/><rect x="6.5" y="6.5" width="4.5" height="4.5" fill="url(#pg)"/>
<path d="M6.5 0.5 V12.5 M0.5 6.5 H12.5" stroke="#7A4A28" stroke-width="1"/><path d="M6.5 0.5 V1.5 M6.5 11.5 V12.5 M0.5 6.5 H1.5 M11.5 6.5 H12.5" stroke="#5A3010" stroke-width="1.5"/>
</svg>
<span style="left:89px;top:304px;font:400 11px/16px 'Liberation Sans',sans-serif;color:#000;letter-spacing:0px;">util</span>
<div style="left:261px;top:94px;width:1px;height:438px;background:#808080;"></div>
<div style="left:262px;top:95px;width:1px;height:436px;background:#404040;"></div>
<div style="left:651px;top:96px;width:1px;height:434px;background:#808080;"></div>
<div style="left:652px;top:95px;width:1px;height:436px;background:#D4D0C8;"></div>
<div style="left:653px;top:94px;width:1px;height:438px;background:#FFFFFF;"></div>
<div style="left:263px;top:529px;width:389px;height:1px;background:#808080;"></div>
<div style="left:262px;top:530px;width:391px;height:1px;background:#D4D0C8;"></div>
<div style="left:257px;top:531px;width:397px;height:1px;background:#FFFFFF;"></div>
<div style="left:263px;top:96px;width:388px;height:22px;background:linear-gradient(#C6C2BA,#F2F0EC);"></div>
<div style="left:263px;top:118px;width:388px;height:1px;background:#A09C98;"></div>
<div style="left:263px;top:119px;width:388px;height:3px;background:linear-gradient(#DAD6CE,#B4B0A8);"></div>
<div style="left:263px;top:96px;width:6px;height:22px;background:linear-gradient(#D4D0C8,#F0EEEA);"></div>
<div style="left:270px;top:101px;width:132px;height:8px;background:#E8E6E2;"></div>
<div style="left:270px;top:109px;width:132px;height:8px;background:#D4D0C8;"></div>
<div style="left:270px;top:117px;width:132px;height:1px;background:#FFFFFF;"></div>
<div style="left:270px;top:101px;width:1px;height:17px;background:#FFFFFF;"></div>
<div style="left:401px;top:101px;width:1px;height:17px;background:#F4F2EE;"></div>
<div style="left:271px;top:100px;width:130px;height:1px;background:#919191;"></div>
<div style="left:270px;top:101px;width:1px;height:1px;background:#A8A6A2;"></div>
<div style="left:401px;top:101px;width:1px;height:1px;background:#A8A6A2;"></div>
<div style="left:269px;top:100px;width:1px;height:2px;background:#C8C4BC;"></div>
<div style="left:402px;top:100px;width:1px;height:2px;background:#C8C4BC;"></div>
<div style="left:269px;top:102px;width:1px;height:17px;background:#919191;"></div>
<div style="left:402px;top:102px;width:1px;height:17px;background:#919191;"></div>
<span style="left:276px;top:102px;font:400 11px/16px 'Liberation Sans',sans-serif;color:#000;letter-spacing:-0.28px;">EJBCatalogDAO.class</span>
<div style="left:403px;top:101px;width:150px;height:21px;background:linear-gradient(#FFFFFF 0,#FFFFFF 8px,#E2DED8 16px,#D8D4CC 21px);"></div>
<div style="left:404px;top:100px;width:148px;height:1px;background:#919191;"></div>
<div style="left:402px;top:102px;width:1px;height:17px;background:#919191;"></div>
<div style="left:553px;top:102px;width:1px;height:17px;background:#919191;"></div>
<div style="left:403px;top:101px;width:1px;height:1px;background:#919191;"></div>
<div style="left:552px;top:101px;width:1px;height:1px;background:#919191;"></div>
<span style="left:408px;top:102px;font:700 11.5px/16px 'Liberation Sans',sans-serif;color:#000;letter-spacing:0.25px;-webkit-text-stroke:0.25px #000;">EntityCategory.class</span>
<svg style="left:539px;top:107px" width="9" height="8" viewBox="0 0 9 8"><path d="M0.5 0 L8.5 8 M8.5 0 L0.5 8" stroke="#808080" stroke-width="1.4"/></svg>
<svg style="left:637px;top:106px" width="11" height="10" viewBox="0 0 11 10"><path d="M1 1.5 H10 M1 3.5 H10 L5.5 9 Z" stroke="#FFFFFF" stroke-width="1" fill="#FFFFFF" opacity="0.7"/><path d="M2 2.5 H9" stroke="#000" stroke-width="1"/><path d="M2 4 H9 L5.5 8 Z" fill="#000"/></svg>
<div style="left:264px;top:122px;width:387px;height:1px;background:#808080;"></div>
<div style="left:264px;top:122px;width:1px;height:407px;background:#808080;"></div>
<div style="left:265px;top:123px;width:385px;height:1px;background:#404040;"></div>
<div style="left:265px;top:123px;width:1px;height:405px;background:#404040;"></div>
<div style="left:649px;top:124px;width:1px;height:404px;background:#D4D0C8;"></div>
<div style="left:650px;top:123px;width:1px;height:406px;background:#FFFFFF;"></div>
<div style="left:265px;top:527px;width:385px;height:1px;background:#D4D0C8;"></div>
<div style="left:264px;top:528px;width:387px;height:1px;background:#FFFFFF;"></div>
<div style="left:266px;top:124px;width:367px;height:387px;background:#FFFFFF;"></div>
<div style="left:266px;top:124px;width:367px;height:387px;overflow:hidden">
<div class="cl" style="left:1px;top:1px"><b style="color:#7F0055;font-weight:700">import</b> javax.persistence.PersistenceContext;</div>
<div class="cl" style="left:1px;top:17px"><b style="color:#7F0055;font-weight:700">import</b> javax.persistence.Table;</div>
<div class="cl" style="left:1px;top:33px"></div>
<div class="cl" style="left:1px;top:49px"><b style="color:#646464">@Entity</b></div>
<div class="cl" style="left:1px;top:65px"><b style="color:#646464">@Table</b>(name=<b style="color:#2A00FF">&quot;CATEGORY&quot;</b>)</div>
<div class="cl" style="left:1px;top:81px"><b style="color:#7F0055;font-weight:700">public</b> <b style="color:#7F0055;font-weight:700">class</b> EntityCategory</div>
<div class="cl" style="left:1px;top:97px">{</div>
<div class="cl" style="left:1px;top:113px"><b style="color:#646464">  @PersistenceContext</b></div>
<div class="cl" style="left:1px;top:129px">  <b style="color:#7F0055;font-weight:700">private</b> EntityManager <b style="color:#0000C0">em</b>;</div>
<div class="cl" style="left:1px;top:145px">  <b style="color:#7F0055;font-weight:700">private</b> <b style="color:#7F0055;font-weight:700">int</b> <b style="background:#FFFF00;color:#0000C0;display:inline-block;height:16px;vertical-align:top;margin-top:-1px;line-height:17px">id</b>;</div>
<div class="cl" style="left:1px;top:161px">  <b style="color:#7F0055;font-weight:700">private</b> Map&lt;<b style="text-decoration:underline">String</b>, <b style="text-decoration:underline">EntityCategoryDetail</b>&gt; <b style="color:#0000C0">details</b>;</div>
<div class="cl" style="left:1px;top:177px"></div>
<div class="cl" style="left:1px;top:193px">  <b style="color:#7F0055;font-weight:700">public</b> EntityCategory()</div>
<div class="cl" style="left:1px;top:209px">  {</div>
<div class="cl" style="left:1px;top:225px">    <b style="color:#7F0055;font-weight:700">this</b>.<b style="background:#FFFF00;color:#0000C0;display:inline-block;height:16px;vertical-align:top;margin-top:-1px;line-height:17px">id</b> = <b style="color:#2A00FF">0</b>;</div>
<div class="cl" style="left:1px;top:241px">    <b style="color:#7F0055;font-weight:700">this</b>.<b style="color:#0000C0">details</b> = <b style="color:#7F0055;font-weight:700">new</b> HashMap();</div>
<div class="cl" style="left:1px;top:257px">  }</div>
<div class="cl" style="left:1px;top:273px"></div>
<div class="cl" style="left:1px;top:289px"><b style="color:#646464">  @Id</b></div>
<div class="cl" style="left:1px;top:305px"><b style="color:#646464">  @GeneratedValue</b></div>
<div class="cl" style="left:1px;top:321px">  <b style="color:#646464">@Column</b>(name=<b style="color:#2A00FF">&quot;ID&quot;</b>)</div>
<div class="cl" style="left:1px;top:337px">  <b style="color:#7F0055;font-weight:700">public</b> <b style="color:#7F0055;font-weight:700">int</b> getId()</div>
<div class="cl" style="left:1px;top:353px">  {</div>
<div class="cl" style="left:1px;top:369px">    <b style="color:#7F0055;font-weight:700">return</b> <b style="color:#7F0055;font-weight:700">this</b>.<b style="background:#FFFF00;color:#0000C0;display:inline-block;height:16px;vertical-align:top;margin-top:-1px;line-height:17px">id</b>;</div>
</div>
<div style="left:633px;top:124px;width:16px;height:387px;background:repeating-conic-gradient(#FFFFFF 0 25%,#D4D0C8 0 50%) 0 0/2px 2px;"></div>
<div style="left:633px;top:124px;width:16px;height:16px;background:#D4D0C8;"></div>
<div style="left:633px;top:124px;width:16px;height:1px;background:#D4D0C8;"></div>
<div style="left:633px;top:124px;width:1px;height:16px;background:#D4D0C8;"></div>
<div style="left:634px;top:125px;width:14px;height:1px;background:#FFFFFF;"></div>
<div style="left:634px;top:125px;width:1px;height:14px;background:#FFFFFF;"></div>
<div style="left:634px;top:138px;width:14px;height:1px;background:#808080;"></div>
<div style="left:647px;top:125px;width:1px;height:14px;background:#808080;"></div>
<div style="left:633px;top:139px;width:16px;height:1px;background:#404040;"></div>
<div style="left:648px;top:124px;width:1px;height:16px;background:#404040;"></div>
<svg style="left:637px;top:130px" width="7" height="4" viewBox="0 0 7 4"><path d="M3.5 0 L7 4 H0 Z" fill="#000"/></svg>
<div style="left:633px;top:201px;width:16px;height:122px;background:#D4D0C8;"></div>
<div style="left:633px;top:201px;width:16px;height:1px;background:#D4D0C8;"></div>
<div style="left:633px;top:201px;width:1px;height:122px;background:#D4D0C8;"></div>
<div style="left:634px;top:202px;width:14px;height:1px;background:#FFFFFF;"></div>
<div style="left:634px;top:202px;width:1px;height:120px;background:#FFFFFF;"></div>
<div style="left:634px;top:321px;width:14px;height:1px;background:#808080;"></div>
<div style="left:647px;top:202px;width:1px;height:120px;background:#808080;"></div>
<div style="left:633px;top:322px;width:16px;height:1px;background:#404040;"></div>
<div style="left:648px;top:201px;width:1px;height:122px;background:#404040;"></div>
<div style="left:633px;top:495px;width:16px;height:16px;background:#D4D0C8;"></div>
<div style="left:633px;top:495px;width:16px;height:1px;background:#D4D0C8;"></div>
<div style="left:633px;top:495px;width:1px;height:16px;background:#D4D0C8;"></div>
<div style="left:634px;top:496px;width:14px;height:1px;background:#FFFFFF;"></div>
<div style="left:634px;top:496px;width:1px;height:14px;background:#FFFFFF;"></div>
<div style="left:634px;top:509px;width:14px;height:1px;background:#808080;"></div>
<div style="left:647px;top:496px;width:1px;height:14px;background:#808080;"></div>
<div style="left:633px;top:510px;width:16px;height:1px;background:#404040;"></div>
<div style="left:648px;top:495px;width:1px;height:16px;background:#404040;"></div>
<svg style="left:637px;top:501px" width="7" height="4" viewBox="0 0 7 4"><path d="M0 0 H7 L3.5 4 Z" fill="#000"/></svg>
<div style="left:266px;top:511px;width:367px;height:16px;background:repeating-conic-gradient(#FFFFFF 0 25%,#D4D0C8 0 50%) 0 0/2px 2px;"></div>
<div style="left:266px;top:511px;width:16px;height:16px;background:#D4D0C8;"></div>
<div style="left:266px;top:511px;width:16px;height:1px;background:#D4D0C8;"></div>
<div style="left:266px;top:511px;width:1px;height:16px;background:#D4D0C8;"></div>
<div style="left:267px;top:512px;width:14px;height:1px;background:#FFFFFF;"></div>
<div style="left:267px;top:512px;width:1px;height:14px;background:#FFFFFF;"></div>
<div style="left:267px;top:525px;width:14px;height:1px;background:#808080;"></div>
<div style="left:280px;top:512px;width:1px;height:14px;background:#808080;"></div>
<div style="left:266px;top:526px;width:16px;height:1px;background:#404040;"></div>
<div style="left:281px;top:511px;width:1px;height:16px;background:#404040;"></div>
<svg style="left:272px;top:515px" width="4" height="7" viewBox="0 0 4 7"><path d="M0 3.5 L4 0 V7 Z" fill="#000"/></svg>
<div style="left:282px;top:511px;width:61px;height:16px;background:#D4D0C8;"></div>
<div style="left:282px;top:511px;width:61px;height:1px;background:#D4D0C8;"></div>
<div style="left:282px;top:511px;width:1px;height:16px;background:#D4D0C8;"></div>
<div style="left:283px;top:512px;width:59px;height:1px;background:#FFFFFF;"></div>
<div style="left:283px;top:512px;width:1px;height:14px;background:#FFFFFF;"></div>
<div style="left:283px;top:525px;width:59px;height:1px;background:#808080;"></div>
<div style="left:341px;top:512px;width:1px;height:14px;background:#808080;"></div>
<div style="left:282px;top:526px;width:61px;height:1px;background:#404040;"></div>
<div style="left:342px;top:511px;width:1px;height:16px;background:#404040;"></div>
<div style="left:617px;top:511px;width:16px;height:16px;background:#D4D0C8;"></div>
<div style="left:617px;top:511px;width:16px;height:1px;background:#D4D0C8;"></div>
<div style="left:617px;top:511px;width:1px;height:16px;background:#D4D0C8;"></div>
<div style="left:618px;top:512px;width:14px;height:1px;background:#FFFFFF;"></div>
<div style="left:618px;top:512px;width:1px;height:14px;background:#FFFFFF;"></div>
<div style="left:618px;top:525px;width:14px;height:1px;background:#808080;"></div>
<div style="left:631px;top:512px;width:1px;height:14px;background:#808080;"></div>
<div style="left:617px;top:526px;width:16px;height:1px;background:#404040;"></div>
<div style="left:632px;top:511px;width:1px;height:16px;background:#404040;"></div>
<svg style="left:623px;top:515px" width="4" height="7" viewBox="0 0 4 7"><path d="M4 3.5 L0 0 V7 Z" fill="#000"/></svg>
<div style="left:633px;top:511px;width:16px;height:16px;background:#D4D0C8;"></div>
<span style="left:9px;top:540px;font:400 11px/16px 'Liberation Sans',sans-serif;color:#000;">Find:</span>
<div style="left:38px;top:537px;width:150px;height:1px;background:#808080;"></div>
<div style="left:38px;top:537px;width:1px;height:21px;background:#808080;"></div>
<div style="left:39px;top:538px;width:148px;height:1px;background:#404040;"></div>
<div style="left:39px;top:538px;width:1px;height:19px;background:#404040;"></div>
<div style="left:39px;top:556px;width:148px;height:1px;background:#D4D0C8;"></div>
<div style="left:186px;top:538px;width:1px;height:19px;background:#D4D0C8;"></div>
<div style="left:38px;top:557px;width:150px;height:1px;background:#FFFFFF;"></div>
<div style="left:187px;top:537px;width:1px;height:21px;background:#FFFFFF;"></div>
<div style="left:40px;top:539px;width:146px;height:17px;background:#FFFFFF;"></div>
<div style="left:44px;top:540px;width:8px;height:13px;background:#0A246A;"></div>
<span style="left:43.5px;top:539px;font:400 11px/16px 'Liberation Sans',sans-serif;color:#FFFFFF;letter-spacing:-0.7px;">id</span>
<div style="left:170px;top:539px;width:16px;height:17px;background:#D4D0C8;"></div>
<div style="left:170px;top:539px;width:16px;height:1px;background:#D4D0C8;"></div>
<div style="left:170px;top:539px;width:1px;height:17px;background:#D4D0C8;"></div>
<div style="left:171px;top:540px;width:14px;height:1px;background:#FFFFFF;"></div>
<div style="left:171px;top:540px;width:1px;height:15px;background:#FFFFFF;"></div>
<div style="left:171px;top:554px;width:14px;height:1px;background:#808080;"></div>
<div style="left:184px;top:540px;width:1px;height:15px;background:#808080;"></div>
<div style="left:170px;top:555px;width:16px;height:1px;background:#404040;"></div>
<div style="left:185px;top:539px;width:1px;height:17px;background:#404040;"></div>
<svg style="left:174px;top:545px" width="7" height="4" viewBox="0 0 7 4"><path d="M0 0 H7 L3.5 4 Z" fill="#000"/></svg>
<svg style="left:192px;top:537px" width="18" height="20" viewBox="0 0 18 20">
<rect x="3.5" y="5.5" width="12" height="12" fill="#F2F5FC" stroke="#B8C4DC" stroke-width="1"/>
<path d="M15.5 5 V18" stroke="#8898B8" stroke-width="1"/>
<path d="M10 5.5h4 M12 7.5h2 M12 9.5h2 M11 11.5h3 M9 13.5h1.5 M12 13.5h2 M9 15.5h5" stroke="#A8B4DC" stroke-width="1"/>
<rect x="5" y="15" width="3" height="2" fill="#205090"/>
<path d="M4.5 2.5 H8.5 V8.5 H10.5 L6.5 13.5 L2.5 8.5 H4.5 Z" fill="#FFE898" stroke="#D09010" stroke-width="1.2" stroke-linejoin="round"/>
</svg>
<span style="left:213px;top:540px;font:400 11px/16px 'Liberation Sans',sans-serif;color:#000;">Next</span>
<svg style="left:245px;top:537px" width="18" height="20" viewBox="0 0 18 20">
<rect x="3.5" y="2.5" width="12" height="12" fill="#F2F5FC" stroke="#B8C4DC" stroke-width="1"/>
<path d="M15.5 2 V15" stroke="#8898B8" stroke-width="1"/>
<rect x="5" y="3" width="3" height="2" fill="#205090"/>
<path d="M9 4.5h5 M9 6.5h1.5 M12 6.5h2 M11 8.5h3 M12 10.5h2 M12 12.5h2 M10 14.5h4" stroke="#A8B4DC" stroke-width="1"/>
<path d="M6.5 6.5 L10.5 11.5 H8.5 V17.5 H4.5 V11.5 H2.5 Z" fill="#FFE898" stroke="#D09010" stroke-width="1.2" stroke-linejoin="round"/>
</svg>
<span style="left:266px;top:540px;font:400 11px/16px 'Liberation Sans',sans-serif;color:#000;">Previous</span>
<div style="left:316px;top:541px;width:13px;height:1px;background:#808080;"></div>
<div style="left:316px;top:541px;width:1px;height:13px;background:#808080;"></div>
<div style="left:317px;top:542px;width:11px;height:1px;background:#404040;"></div>
<div style="left:317px;top:542px;width:1px;height:11px;background:#404040;"></div>
<div style="left:317px;top:552px;width:11px;height:1px;background:#D4D0C8;"></div>
<div style="left:327px;top:542px;width:1px;height:11px;background:#D4D0C8;"></div>
<div style="left:316px;top:553px;width:13px;height:1px;background:#FFFFFF;"></div>
<div style="left:328px;top:541px;width:1px;height:13px;background:#FFFFFF;"></div>
<div style="left:318px;top:543px;width:9px;height:9px;background:#FFFFFF;"></div>
<svg style="left:318px;top:543px" width="9" height="9" viewBox="0 0 9 9"><path d="M1.5 3.5 L3.5 6 L8 1.5" stroke="#000" stroke-width="2" fill="none"/></svg>
<span style="left:333px;top:540px;font:400 11px/16px 'Liberation Sans',sans-serif;color:#000;letter-spacing:-0.25px;">Case senstive</span>
<svg style="left:641px;top:544px" width="8" height="8" viewBox="0 0 8 8"><path d="M0 0 L8 8 M8 0 L0 8" stroke="#102010" stroke-width="1.2"/></svg>
</body></html>
